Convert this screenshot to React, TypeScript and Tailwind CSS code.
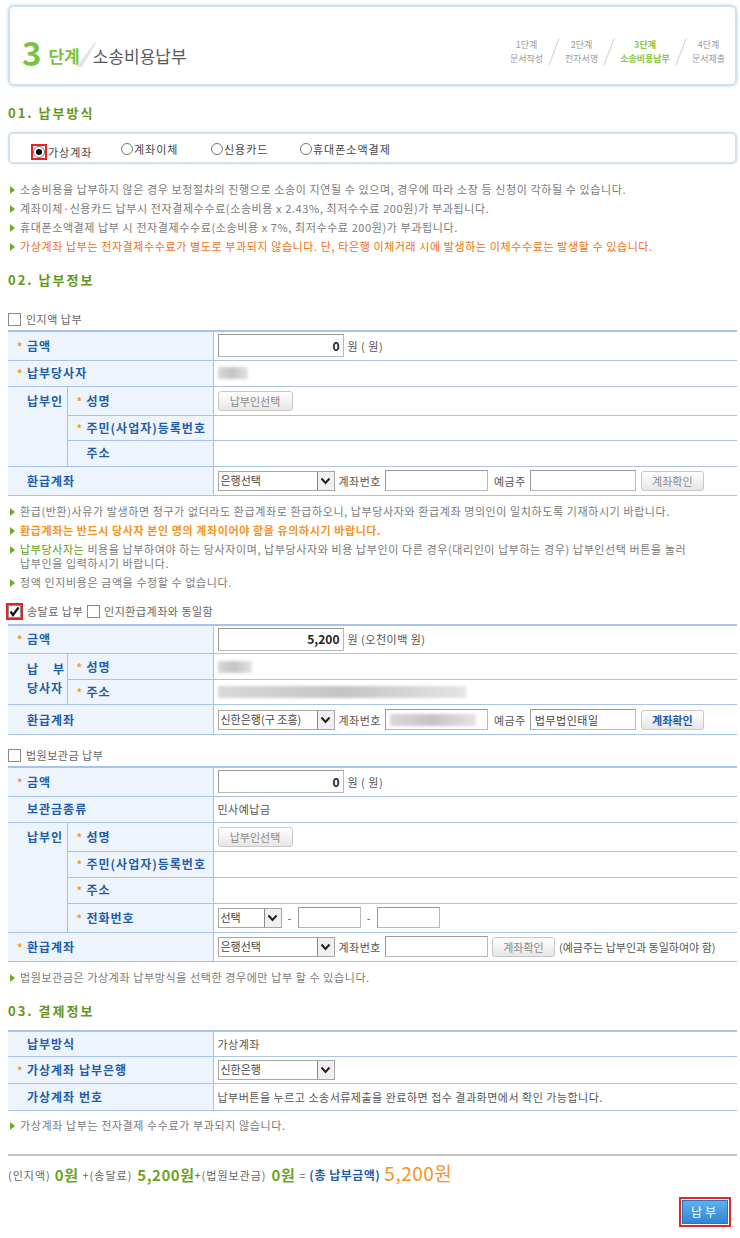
import React from 'react';

const border = 'border-[#a7c3e9]';

const Bullet = () => (
  <svg width="5" height="8" viewBox="0 0 5 8" className="inline-block shrink-0 mt-[4px] mr-[5px]">
    <polygon points="0,0 5,4 0,8" fill="#72aa22" />
  </svg>
);

const Star = ({ on }: { on: boolean }) => (
  <span className="inline-block w-[10px] text-[11px] text-[#f29b1d]">{on ? '*' : ''}</span>
);

const Lbl = ({
  star = false,
  children,
  colSpan,
  rowSpan,
  className = '',
}: {
  star?: boolean;
  children: React.ReactNode;
  colSpan?: number;
  rowSpan?: number;
  className?: string;
}) => (
  <td
    colSpan={colSpan}
    rowSpan={rowSpan}
    className={`bg-[#eef4fc] border-b ${border} pl-[9px] font-bold text-[12px] leading-[14px] tracking-[1px] text-[#1f5da8] whitespace-nowrap ${className}`}
  >
    <Star on={star} />
    {children}
  </td>
);

const Val = ({ children, className = '' }: { children?: React.ReactNode; className?: string }) => (
  <td className={`border-b border-l ${border} pl-[4px] text-[11px] leading-[14px] tracking-[0.5px] text-[#555] ${className}`}>
    <div className="flex items-center gap-[4px]">{children}</div>
  </td>
);

const Input = ({ className = '', value = '', bold = false }: { className?: string; value?: string; bold?: boolean }) => (
  <span
    className={`inline-flex items-center justify-end border border-[#b8b8b8] border-t-[#999] border-l-[#999] bg-white px-[3px] text-[12px] tracking-normal text-[#222] ${bold ? 'font-bold' : ''} ${className}`}
  >
    {value}
  </span>
);

const Select = ({ className = '', text }: { className?: string; text: string }) => (
  <span className={`inline-flex items-stretch h-[20px] border border-[#a6a6a6] bg-white ${className}`}>
    <span className="flex-1 pl-[2px] text-[11px] leading-[16px] tracking-normal text-[#444] whitespace-nowrap overflow-hidden">{text}</span>
    <span className="w-[17px] flex items-center justify-center border-l border-[#8a8a8a] bg-[#f0f0f0]">
      <svg width="11" height="8" viewBox="0 0 11 8">
        <polyline points="1.5,1.5 5.5,6 9.5,1.5" fill="none" stroke="#222" strokeWidth="2" />
      </svg>
    </span>
  </span>
);

const Btn = ({ children, blue = false, className = '' }: { children: React.ReactNode; blue?: boolean; className?: string }) => (
  <span
    className={`inline-flex items-center justify-center h-[20px] rounded-[3px] border border-[#c8c8c8] bg-gradient-to-b from-white to-[#e6e6e6] text-[11px] tracking-normal ${blue ? 'text-[#1f5da8] font-bold' : 'text-[#8a8a8a]'} ${className}`}
  >
    {children}
  </span>
);

const Blur = ({ className = '' }: { className?: string }) => (
  <span className={`inline-block h-[12px] bg-gradient-to-r from-[#d8d8d8] via-[#c4c4c4] to-[#e4e4e4] blur-[1.5px] ${className}`} />
);

const Check = ({ checked = false, red = false }: { checked?: boolean; red?: boolean }) => (
  <span className={`inline-flex items-center justify-center ${red ? 'w-[17px] h-[17px] border-2 border-[#e0262b] -ml-[2px]' : ''}`}>
    <span className="w-[13px] h-[13px] border border-[#8a8a8a] bg-white flex items-center justify-center">
      {checked && (
        <svg width="11" height="11" viewBox="0 0 11 11">
          <polyline points="1.5,5.5 4,9 9.5,1.5" fill="none" stroke="#111" strokeWidth="2.2" />
        </svg>
      )}
    </span>
  </span>
);

const Radio = ({ checked = false, red = false, label }: { checked?: boolean; red?: boolean; label: string }) => (
  <span className="inline-flex items-center text-[11px] text-[#444] tracking-[1px]">
    <span className={`inline-flex items-center justify-center ${red ? 'w-[16px] h-[16px] border-2 border-[#e0262b]' : ''}`}>
      <span className="w-[12px] h-[12px] rounded-full border border-[#777] bg-white flex items-center justify-center">
        {checked && <span className="w-[6px] h-[6px] rounded-full bg-black" />}
      </span>
    </span>
    <span className="ml-[1px]">{label}</span>
  </span>
);

const Title = ({ children, className = '' }: { children: React.ReactNode; className?: string }) => (
  <div className={`h-[16px] text-[13px] leading-[16px] font-bold text-[#649619] tracking-[2px] ${className}`}>{children}</div>
);

const Notes = ({ items, className = '' }: { items: React.ReactNode[]; className?: string }) => (
  <ul className={`flex flex-col gap-[5px] pl-[2px] ${className}`}>
    {items.map((t, i) => (
      <li key={i} className="flex text-[11px] leading-[14px] tracking-[0.6px] text-[#7a7a7a]">
        <Bullet />
        <span>{t}</span>
      </li>
    ))}
  </ul>
);

const Steps = () => {
  const steps = [
    ['1단계', '문서작성'],
    ['2단계', '전자서명'],
    ['3단계', '소송비용납부'],
    ['4단계', '문서제출'],
  ];
  return (
    <div className="flex items-center">
      {steps.map(([a, b], i) => (
        <React.Fragment key={a}>
          {i > 0 && (
            <svg width="20" height="30" viewBox="0 0 20 30" className="mx-[1px]">
              <line x1="15" y1="2" x2="5" y2="28" stroke="#cfcfcf" strokeWidth="1" />
            </svg>
          )}
          <div className={`flex flex-col items-center text-[9px] leading-[14px] ${i === 2 ? 'text-[#8cc63f] font-bold' : 'text-[#9a9a9a]'}`}>
            <span>{a}</span>
            <span>{b}</span>
          </div>
        </React.Fragment>
      ))}
    </div>
  );
};

export default function App() {
  return (
    <div className="w-[740px] min-h-[1238px] bg-white pl-[8px] pr-[3px] pt-[5px] font-['Noto_Sans_CJK_KR','Noto_Sans',sans-serif] text-[#555]">
      {/* header */}
      <div className="h-[81px] rounded-[6px] border-2 border-[#cfe0ee] shadow-[0_0_3px_#b9d1e4] flex items-center justify-between pl-[12px] pr-[10px] pt-[12px]">
        <div className="flex items-end">
          <span className="text-[33px] leading-[30px] font-bold text-[#7cc242]">3</span>
          <span className="ml-[7px] text-[17px] leading-[22px] font-bold text-[#7cc242]">단계</span>
          <svg width="20" height="26" viewBox="0 0 20 26" className="-ml-[4px]">
            <defs>
              <linearGradient id="sl" x1="0" y1="0" x2="1" y2="1">
                <stop offset="0" stopColor="#f2f2f2" />
                <stop offset="1" stopColor="#d9d9d9" />
              </linearGradient>
            </defs>
            <polygon points="18,2 20,2 6,26 0,26" fill="url(#sl)" />
          </svg>
          <span className="-ml-[3px] text-[17px] leading-[22px] text-[#5a5a5a]">소송비용납부</span>
        </div>
        <Steps />
      </div>

      {/* 01 */}
      <Title className="mt-[19px]">01. 납부방식</Title>
      <div className="mt-[11px] h-[32px] rounded-[5px] border-2 border-[#d3e2ef] shadow-[0_0_2px_#c3d6e6] flex items-center pl-[21px]">
        <div className="w-[90px]"><Radio checked red label="가상계좌" /></div>
        <div className="w-[90px]"><Radio label="계좌이체" /></div>
        <div className="w-[89px]"><Radio label="신용카드" /></div>
        <div><Radio label="휴대폰소액결제" /></div>
      </div>
      <Notes
        className="mt-[18px]"
        items={[
          '소송비용을 납부하지 않은 경우 보정절차의 진행으로 소송이 지연될 수 있으며, 경우에 따라 소장 등 신청이 각하될 수 있습니다.',
          '계좌이체·신용카드 납부시 전자결제수수료(소송비용 x 2.43%, 최저수수료 200원)가 부과됩니다.',
          '휴대폰소액결제 납부 시 전자결제수수료(소송비용 x 7%, 최저수수료 200원)가 부과됩니다.',
          <span className="text-[#ec7014]">가상계좌 납부는 전자결제수수료가 별도로 부과되지 않습니다. 단, 타은행 이체거래 시에 발생하는 이체수수료는 발생할 수 있습니다.</span>,
        ]}
      />

      {/* 02 */}
      <Title className="mt-[19px]">02. 납부정보</Title>

      <div className="mt-[23px] h-[16px] flex items-center gap-[5px] text-[11px] tracking-[0.5px] text-[#666]">
        <Check />
        <span>인지액 납부</span>
      </div>
      <table className={`mt-[3px] w-full table-fixed border-collapse border-t-2 ${border}`}>
        <colgroup>
          <col className="w-[59px]" />
          <col className="w-[146px]" />
          <col />
        </colgroup>
        <tbody>
          <tr className="h-[29px]">
            <Lbl star colSpan={2}>금액</Lbl>
            <Val>
              <Input className="w-[126px] h-[23px]" value="0" bold />
              <span>원 ( 원)</span>
            </Val>
          </tr>
          <tr className="h-[26px]">
            <Lbl star colSpan={2}>납부당사자</Lbl>
            <Val><Blur className="w-[30px]" /></Val>
          </tr>
          <tr className="h-[29px]">
            <Lbl rowSpan={3} className={`align-top pt-[7px] border-r ${border}`}>납부인</Lbl>
            <Lbl star>성명</Lbl>
            <Val><Btn className="w-[75px]">납부인선택</Btn></Val>
          </tr>
          <tr className="h-[25px]">
            <Lbl star>주민(사업자)등록번호</Lbl>
            <Val />
          </tr>
          <tr className="h-[26px]">
            <Lbl>주소</Lbl>
            <Val />
          </tr>
          <tr className="h-[29px]">
            <Lbl colSpan={2}>환급계좌</Lbl>
            <Val>
              <Select className="w-[117px]" text="은행선택" />
              <span>계좌번호</span>
              <Input className="w-[103px] h-[21px]" />
              <span className="ml-[2px]">예금주</span>
              <Input className="w-[106px] h-[21px]" />
              <Btn className="w-[63px] ml-[1px]">계좌확인</Btn>
            </Val>
          </tr>
        </tbody>
      </table>
      <Notes
        className="mt-[8px]"
        items={[
          '환급(반환)사유가 발생하면 청구가 없더라도 환급계좌로 환급하오니, 납부당사자와 환급계좌 명의인이 일치하도록 기재하시기 바랍니다.',
          <span className="font-bold text-[#f7941d]">환급계좌는 반드시 당사자 본인 명의 계좌이어야 함을 유의하시기 바랍니다.</span>,
          <span>
            <span className="text-[#5d9a12]">납부당사자는</span> 비용을 납부하여야 하는 당사자이며, 납부당사자와 비용 납부인이 다른 경우(대리인이 납부하는 경우) 납부인선택 버튼을 눌러
            <br />
            납부인을 입력하시기 바랍니다.
          </span>,
          '정액 인지비용은 금액을 수정할 수 없습니다.',
        ]}
      />

      <div className="mt-[15px] h-[16px] flex items-center gap-[4px] text-[11px] tracking-[0.5px] text-[#666]">
        <Check checked red />
        <span>송달료 납부</span>
        <Check />
        <span>인지환급계좌와 동일함</span>
      </div>
      <table className={`mt-[4px] w-full table-fixed border-collapse border-t-2 ${border}`}>
        <colgroup>
          <col className="w-[59px]" />
          <col className="w-[146px]" />
          <col />
        </colgroup>
        <tbody>
          <tr className="h-[29px]">
            <Lbl star colSpan={2}>금액</Lbl>
            <Val>
              <Input className="w-[126px] h-[23px]" value="5,200" bold />
              <span>원 (오천이백 원)</span>
            </Val>
          </tr>
          <tr className="h-[26px]">
            <Lbl rowSpan={2} className={`align-top pt-[5px] border-r ${border}`}>
              <span className="inline-flex flex-col leading-[19px]">
                <span className="flex justify-between w-[38px]"><span>납</span><span>부</span></span>
                <span>당사자</span>
              </span>
            </Lbl>
            <Lbl star>성명</Lbl>
            <Val><Blur className="w-[34px]" /></Val>
          </tr>
          <tr className="h-[25px]">
            <Lbl star>주소</Lbl>
            <Val><Blur className="w-[248px]" /></Val>
          </tr>
          <tr className="h-[30px]">
            <Lbl colSpan={2}>환급계좌</Lbl>
            <Val>
              <Select className="w-[117px]" text="신한은행(구 조흥)" />
              <span>계좌번호</span>
              <span className="inline-flex items-center w-[103px] h-[21px] border border-[#b8b8b8] border-t-[#999] border-l-[#999] px-[4px]">
                <Blur className="w-[86px]" />
              </span>
              <span className="ml-[2px]">예금주</span>
              <span className="inline-flex items-center w-[106px] h-[21px] border border-[#b8b8b8] border-t-[#999] border-l-[#999] px-[4px] text-[11px] text-[#444]">법무법인태일</span>
              <Btn blue className="w-[63px] ml-[1px]">계좌확인</Btn>
            </Val>
          </tr>
        </tbody>
      </table>

      <div className="mt-[12px] h-[16px] flex items-center gap-[5px] text-[11px] tracking-[0.5px] text-[#666]">
        <Check />
        <span>법원보관금 납부</span>
      </div>
      <table className={`mt-[3px] w-full table-fixed border-collapse border-t-2 ${border}`}>
        <colgroup>
          <col className="w-[59px]" />
          <col className="w-[146px]" />
          <col />
        </colgroup>
        <tbody>
          <tr className="h-[29px]">
            <Lbl star colSpan={2}>금액</Lbl>
            <Val>
              <Input className="w-[126px] h-[23px]" value="0" bold />
              <span>원 ( 원)</span>
            </Val>
          </tr>
          <tr className="h-[26px]">
            <Lbl colSpan={2}>보관금종류</Lbl>
            <Val>민사예납금</Val>
          </tr>
          <tr className="h-[29px]">
            <Lbl rowSpan={4} className={`align-top pt-[7px] border-r ${border}`}>납부인</Lbl>
            <Lbl star>성명</Lbl>
            <Val><Btn className="w-[75px]">납부인선택</Btn></Val>
          </tr>
          <tr className="h-[26px]">
            <Lbl star>주민(사업자)등록번호</Lbl>
            <Val />
          </tr>
          <tr className="h-[26px]">
            <Lbl star>주소</Lbl>
            <Val />
          </tr>
          <tr className="h-[29px]">
            <Lbl star>전화번호</Lbl>
            <Val>
              <Select className="w-[64px]" text="선택" />
              <span className="mx-[2px]">-</span>
              <Input className="w-[63px] h-[21px]" />
              <span className="mx-[2px]">-</span>
              <Input className="w-[63px] h-[21px]" />
            </Val>
          </tr>
          <tr className="h-[29px]">
            <Lbl star colSpan={2}>환급계좌</Lbl>
            <Val>
              <Select className="w-[117px]" text="은행선택" />
              <span>계좌번호</span>
              <Input className="w-[103px] h-[21px]" />
              <Btn className="w-[63px]">계좌확인</Btn>
              <span className="tracking-normal">(예금주는 납부인과 동일하여야 함)</span>
            </Val>
          </tr>
        </tbody>
      </table>
      <Notes className="mt-[8px]" items={['법원보관금은 가상계좌 납부방식을 선택한 경우에만 납부 할 수 있습니다.']} />

      {/* 03 */}
      <Title className="mt-[19px]">03. 결제정보</Title>
      <table className={`mt-[11px] w-full table-fixed border-collapse border-t-2 ${border}`}>
        <colgroup>
          <col className="w-[205px]" />
          <col />
        </colgroup>
        <tbody>
          <tr className="h-[26px]">
            <Lbl>납부방식</Lbl>
            <Val>가상계좌</Val>
          </tr>
          <tr className="h-[27px]">
            <Lbl star>가상계좌 납부은행</Lbl>
            <Val><Select className="w-[117px]" text="신한은행" /></Val>
          </tr>
          <tr className="h-[27px]">
            <Lbl>가상계좌 번호</Lbl>
            <Val>납부버튼을 누르고 소송서류제출을 완료하면 접수 결과화면에서 확인 가능합니다.</Val>
          </tr>
        </tbody>
      </table>
      <Notes className="mt-[7px]" items={['가상계좌 납부는 전자결제 수수료가 부과되지 않습니다.']} />

      <div className="mt-[22px] h-[2px] bg-[#c4c4c4]" />

      <div className="mt-[6px] h-[22px] flex items-end text-[11px] leading-[18px] tracking-[1px] text-[#666] whitespace-nowrap">
        <span>(인지액)</span>
        <span className="ml-[4px] text-[15px] font-bold tracking-[0.5px] text-[#6ba51f]">0원</span>
        <span className="ml-[4px]">+(송달료)</span>
        <span className="ml-[5px] text-[15px] font-bold tracking-[0.5px] text-[#6ba51f]">5,200원</span>
        <span>+(법원보관금)</span>
        <span className="ml-[5px] text-[15px] font-bold tracking-[0.5px] text-[#6ba51f]">0원</span>
        <span className="ml-[4px]">=</span>
        <span className="ml-[3px] text-[12px] font-bold tracking-[0.5px] text-[#1f5da8]">(총 납부금액)</span>
        <span className="ml-[4px] text-[19px] leading-[22px] tracking-[0.5px] text-[#f7941d]">5,200원</span>
      </div>

      <div className="mt-[13px] flex justify-end pr-[6px]">
        <div className="border-2 border-[#e0262b] p-[1px]">
          <button className="w-[46px] h-[24px] bg-gradient-to-b from-[#5fb0ea] to-[#2f86d3] border border-[#2a78c0] text-white text-[12px] tracking-[3px] flex items-center justify-center">
            납부
          </button>
        </div>
      </div>
    </div>
  );
}
